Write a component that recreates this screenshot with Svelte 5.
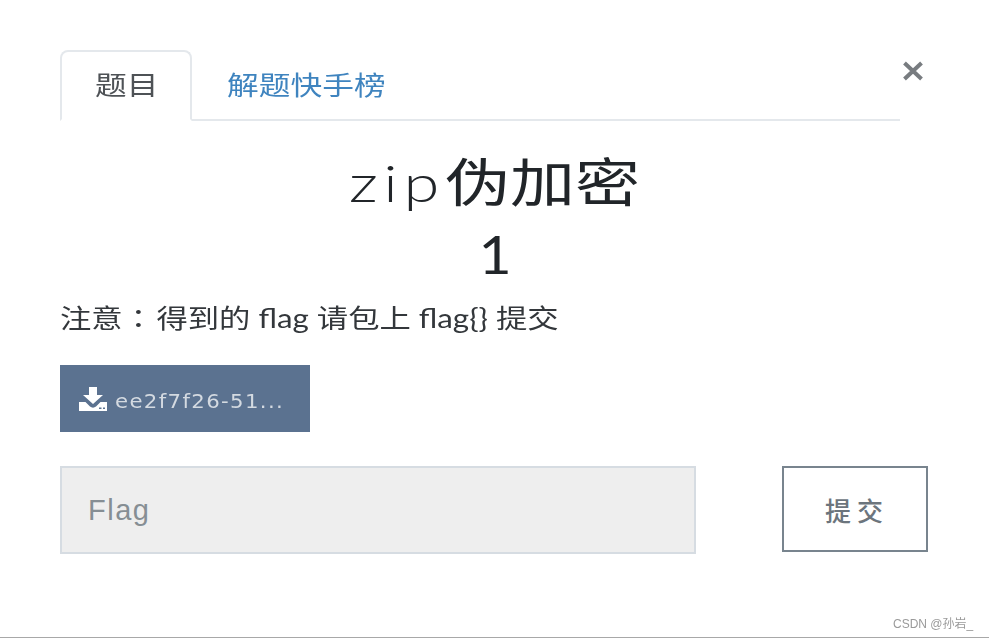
<script>
	let flag = $state('')
	let tab = $state('challenge')
</script>

<div class="modal">
	<button class="close" aria-label="关闭">
		<svg width="24" height="24" viewBox="0 0 24 24"><path d="M3.500 4 L20.500 20 M20.500 4 L3.500 20" /></svg>
	</button>

	<nav class="tabs">
		<button class="tab" class:active={tab === 'challenge'} onclick={() => (tab = 'challenge')}><span class="wide">题目</span></button>
		<button class="tab" class:active={tab === 'solves'} onclick={() => (tab = 'solves')}><span class="wide">解题快手榜</span></button>
	</nav>

	<h2 class="title"><span class="wide"><span class="latin">zip</span>伪加密</span></h2>
	<h3 class="points"><span class="wide">1</span></h3>
	<p class="note"><span class="wide">注意<span class="colon">：</span>得到的 flag 请包上 flag{'{}'} 提交</span></p>

	<a class="download" href="#top">
		<svg width="30" height="26" viewBox="0 0 30 26">
			<path d="M11 1 H19 V9 H25 L15 18 L5 9 H11 Z" />
			<path fill-rule="evenodd" d="M1 16 H7.500 L12 20.500 C13.800 22 16.200 22 18 20.500 L22.500 16 H29 V25 H1 Z M21 21.500 H23.500 V23 H21 Z M25 21.500 H27 V23 H25 Z" />
		</svg>
		<span class="wide file">ee2f7f26-51...</span>
	</a>

	<form class="submit-row" onsubmit={(e) => e.preventDefault()}>
		<input class="flag" type="text" placeholder="Flag" bind:value={flag} />
		<button class="submit" type="submit">提交</button>
	</form>
</div>

<span class="watermark">CSDN @孙岩_</span>

<style>
	:global(body) {
		margin: 0;
		background: #fff;
		font-family: Lato, "Noto Sans CJK SC", sans-serif;
		color: #212529;
	}

	.modal {
		box-sizing: border-box;
		height: 638px;
		padding: 50px 61px 0 60px;
		position: relative;
		filter: blur(0.5px);
	}

	/* the reference is stretched sideways, so text gets a horizontal scale */
	.wide {
		display: inline-block;
		transform: scaleX(1.22);
		transform-origin: left center;
		white-space: nowrap;
	}

	.close {
		position: absolute;
		left: 901px;
		top: 59px;
		padding: 0;
		border: 0;
		background: none;
		line-height: 0;
	}

	.close path {
		fill: none;
		stroke: #787c80;
		stroke-width: 4;
	}

	.tabs {
		display: flex;
		width: 840px;
		height: 71px;
		box-sizing: border-box;
		border-bottom: 2px solid #e4e8ec;
	}

	.tab {
		height: 71px;
		padding: 0 33px 4px;
		border: 2px solid transparent;
		background: none;
		font: inherit;
		font-size: 26px;
		color: #3f84bf;
	}

	.tab.active {
		width: 132px;
		padding: 0 0 4px 33px;
		text-align: left;
		border-color: #e4e8ec;
		border-bottom-color: #fff;
		border-radius: 8px 8px 0 0;
		color: #4e5256;
	}

	.title {
		margin: 29px 0 0;
		height: 65px;
		line-height: 65px;
		text-align: center;
		font-size: 52px;
		font-weight: 400;
	}

	.title .wide {
		transform: scaleX(1.25);
		transform-origin: center;
	}

	.latin {
		letter-spacing: 4.500px;
		font-weight: 300;
	}

	.points {
		margin: 10px 0 0;
		height: 58px;
		line-height: 58px;
		text-align: center;
		font-size: 52px;
		font-weight: 400;
		padding-left: 3px;
	}

	.points .wide {
		transform: scaleX(1.1);
		transform-origin: center;
	}

	.note {
		margin: 16px 0 0;
		height: 36px;
		line-height: 36px;
		font-size: 26px;
		color: #33373b;
	}

	.note .wide {
		transform: scaleX(1.205);
	}

	.colon {
		font-family: "Noto Sans CJK TC", sans-serif;
		letter-spacing: 2px;
	}

	.download {
		display: flex;
		align-items: center;
		gap: 7px;
		width: 250px;
		height: 67px;
		margin-top: 30px;
		padding-left: 18px;
		box-sizing: border-box;
		background: #5b7290;
		color: #d4dae1;
		text-decoration: none;
		font-family: "DejaVu Sans", sans-serif;
		font-size: 19px;
		letter-spacing: 1.2px;
	}

	.download .wide {
		transform: scaleX(1.12);
	}

	.file {
		padding-top: 4px;
	}

	.download svg {
		fill: #fff;
	}

	.submit-row {
		display: flex;
		align-items: flex-start;
		justify-content: space-between;
		margin-top: 34px;
		width: 868px;
	}

	.flag {
		box-sizing: border-box;
		width: 636px;
		height: 88px;
		padding: 0 26px;
		border: 2px solid #d6dce2;
		background: #eee;
		font-family: "Liberation Sans", sans-serif;
		font-size: 29px;
		letter-spacing: 1.5px;
		outline: none;
	}

	.flag::placeholder {
		color: #868e94;
		opacity: 1;
	}

	.submit {
		box-sizing: border-box;
		width: 146px;
		height: 86px;
		border: 2px solid #78848e;
		background: #fff;
		font-family: inherit;
		font-size: 26px;
		font-weight: 500;
		letter-spacing: 6px;
		padding-left: 10px;
		color: #6c757d;
	}

	.watermark {
		position: absolute;
		left: 893px;
		top: 614px;
		font-family: "Liberation Sans", "Noto Sans CJK SC", sans-serif;
		font-size: 12px;
		color: #9a9a9a;
	}

	:global(body)::after {
		content: "";
		position: absolute;
		left: 0;
		top: 637px;
		width: 989px;
		height: 1px;
		background: #a8a8a8;
	}
</style>
